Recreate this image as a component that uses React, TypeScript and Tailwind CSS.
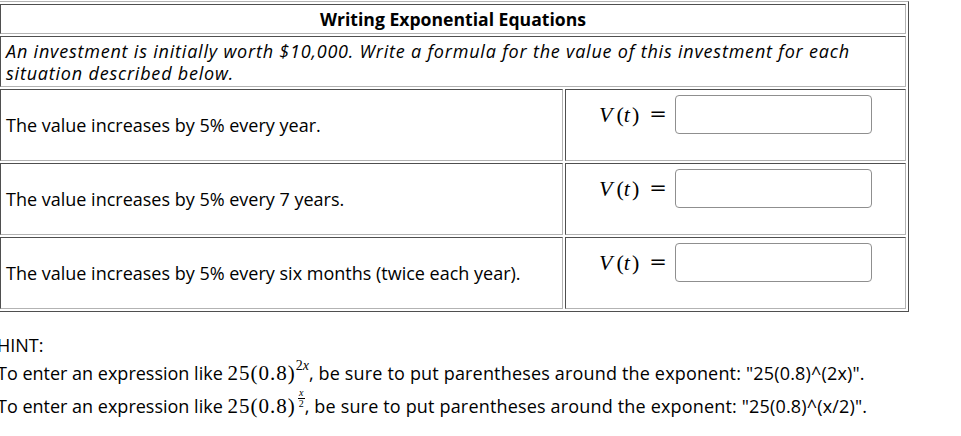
const rows = [
  "The value increases by 5% every year.",
  "The value increases by 5% every 7 years.",
  "The value increases by 5% every six months (twice each year).",
];

const cell =
  "border border-t-[#4f4f4f] border-l-[#4f4f4f] border-r-[#b3b3b3] border-b-[#b3b3b3]";

function VOfT() {
  return (
    <span className="inline-flex items-center font-['Liberation_Serif',serif] text-[22px] leading-none">
      <span className="italic">V</span>
      <span className="ml-[4px]">(</span>
      <span className="italic">t</span>
      <span className="ml-[2px]">)</span>
      <span className="ml-[10px] mr-[8px] font-['DejaVu_Serif',serif] text-[21px]">=</span>
    </span>
  );
}

function Base() {
  return (
    <span className="font-['Liberation_Serif',serif] text-[21px] tracking-[1px]">25(0.8)</span>
  );
}

export default function App() {
  return (
    <div className="font-['Open_Sans',sans-serif] text-[18px] text-black bg-white min-h-[436px] pt-px -ml-[3px]">
      <table className="w-[912px] border-separate border-spacing-[2px] border border-t-[#b3b3b3] border-l-[#b3b3b3] border-r-[#4f4f4f] border-b-[#4f4f4f]">
        <tbody>
          <tr>
            <td colSpan={2} className={`${cell} h-[30px] px-[5px] text-center font-bold text-[17.6px] leading-[22px]`}>
              Writing Exponential Equations
            </td>
          </tr>
          <tr>
            <td colSpan={2} className={`${cell} h-[51px] px-[5px] italic tracking-[0.8px] leading-[22px]`}>
              An investment is initially worth $10,000. Write a formula for the value of this investment for each situation described below.
            </td>
          </tr>
          {rows.map((r) => (
            <tr key={r}>
              <td className={`${cell} w-[563px] h-[72px] px-[5px] align-middle leading-[22px]`}>{r}</td>
              <td className={`${cell} h-[72px] px-[5px] pt-[5px] align-top`}>
                <div className="flex items-center justify-center">
                  <VOfT />
                  <div className="w-[197px] h-[39px] border border-[#8f8f8f] rounded-[4px] bg-white" />
                </div>
              </td>
            </tr>
          ))}
        </tbody>
      </table>

      {/* hint */}
      <div className="mt-[20px] leading-[27px]">
        <div>HINT:</div>
        <div>
          To enter an expression like <Base />
          <span className="font-['Liberation_Serif',serif] text-[14px] leading-none align-[10px]">
            2<span className="italic">x</span>
          </span>
          <span className="tracking-[0.17px]">, be sure to put parentheses around the exponent: "25(0.8)^(2x)".</span>
        </div>
        <div className="mt-[2px]">
          To enter an expression like <Base />
          <span className="inline-flex flex-col items-center ml-[2px] font-['Liberation_Serif',serif] text-[10px] leading-[8px] align-[17px]">
            <span className="italic">x</span>
            <span className="w-[7px] h-px bg-black my-[1px]" />
            <span>2</span>
          </span>
          <span className="tracking-[0.17px]">, be sure to put parentheses around the exponent: "25(0.8)^(x/2)".</span>
        </div>
      </div>
    </div>
  );
}
